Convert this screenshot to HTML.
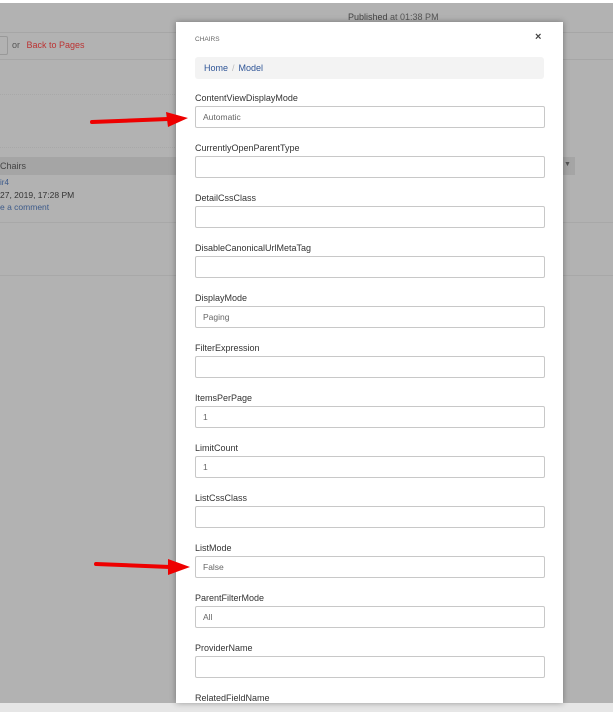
<!DOCTYPE html>
<html><head><style>
body{margin:0;width:613px;height:712px;overflow:hidden;background:#b2b2b2;font-family:"Liberation Sans",sans-serif;position:relative}
.a{position:absolute}
.modal{position:absolute;left:176px;top:22px;width:387px;height:681px;background:#fff;box-shadow:0 0 6px rgba(0,0,0,.35)}
.lbl{position:absolute;left:19px;font-size:9px;color:#333;margin-top:1px}
.inp{position:absolute;left:19px;height:20px;border:1px solid #c8c8c8;border-radius:2px;font-size:8.5px;color:#666;line-height:20px;padding-left:7px;box-sizing:content-box;width:341px}
</style></head><body>
<div class="a" style="left:0;top:0;width:613px;height:3px;background:#fff"></div>
<div class="a" style="left:0;top:32px;width:613px;height:1px;background:#a6a6a6"></div>
<div class="a" style="left:348px;top:12px;font-size:9px;color:#444">Published <span style="color:#555">at 01:38 PM</span></div>
<div class="a" style="left:-4px;top:36px;width:10px;height:17px;border:1px solid #999;border-radius:2px"></div>
<div class="a" style="left:12px;top:40px;font-size:9px;color:#555">or <span style="color:#b33;margin-left:4px">Back to Pages</span></div>
<div class="a" style="left:0;top:59px;width:613px;height:1px;background:#a6a6a6"></div>
<div class="a" style="left:0;top:94px;width:490px;height:52px;border:1px dotted #a8a8a8;border-left:none"></div>
<div class="a" style="left:0;top:157px;width:575px;height:18px;background:#a5a5a5"></div>
<div class="a" style="left:0;top:161px;font-size:9px;color:#444">Chairs</div>
<div class="a" style="left:564px;top:161px;font-size:7px;color:#555">▼</div>
<div class="a" style="left:0;top:178px;font-size:8px;color:#3c5a8a">ir4</div>
<div class="a" style="left:0;top:190px;font-size:8.5px;color:#333">27, 2019, 17:28 PM</div>
<div class="a" style="left:0;top:202px;font-size:8.5px;color:#3c5a8a">e a comment</div>
<div class="a" style="left:0;top:222px;width:613px;height:1px;background:#a8a8a8"></div>
<div class="a" style="left:0;top:275px;width:613px;height:1px;background:#a8a8a8"></div>
<div class="a" style="left:0;top:703px;width:613px;height:9px;background:#e6e6e6"></div>
<div class="modal">
<div class="a" style="left:19px;top:14px;font-size:6.5px;color:#666">CHAIRS</div>
<div class="a" style="left:359px;top:9px;font-size:11px;font-weight:bold;color:#444">×</div>
<div class="a" style="left:19px;top:35px;width:349px;height:22px;background:#f3f3f3;border-radius:3px;font-size:9px;line-height:22px;color:#2f5597"><span style="margin-left:9px">Home</span><span style="color:#bbb;margin:0 4px">/</span>Model</div>
<div class="lbl" style="top:70px">ContentViewDisplayMode</div><div class="inp" style="top:84px">Automatic</div>
<div class="lbl" style="top:120px">CurrentlyOpenParentType</div><div class="inp" style="top:134px"></div>
<div class="lbl" style="top:170px">DetailCssClass</div><div class="inp" style="top:184px"></div>
<div class="lbl" style="top:220px">DisableCanonicalUrlMetaTag</div><div class="inp" style="top:234px"></div>
<div class="lbl" style="top:270px">DisplayMode</div><div class="inp" style="top:284px">Paging</div>
<div class="lbl" style="top:320px">FilterExpression</div><div class="inp" style="top:334px"></div>
<div class="lbl" style="top:370px">ItemsPerPage</div><div class="inp" style="top:384px">1</div>
<div class="lbl" style="top:420px">LimitCount</div><div class="inp" style="top:434px">1</div>
<div class="lbl" style="top:470px">ListCssClass</div><div class="inp" style="top:484px"></div>
<div class="lbl" style="top:520px">ListMode</div><div class="inp" style="top:534px">False</div>
<div class="lbl" style="top:570px">ParentFilterMode</div><div class="inp" style="top:584px">All</div>
<div class="lbl" style="top:620px">ProviderName</div><div class="inp" style="top:634px"></div>
<div class="lbl" style="top:670px">RelatedFieldName</div>
</div>
<svg class="a" style="left:88px;top:110px" width="104" height="20"><path d="M4 12 L80 9" stroke="#e00" stroke-width="4" stroke-linecap="round"/><path d="M78 2 L100 8 L80 17 Z" fill="#e00"/></svg>
<svg class="a" style="left:92px;top:558px" width="100" height="20"><path d="M4 6 L78 9" stroke="#e00" stroke-width="4" stroke-linecap="round"/><path d="M76 1 L98 9 L76 17 Z" fill="#e00"/></svg>
</body></html>
